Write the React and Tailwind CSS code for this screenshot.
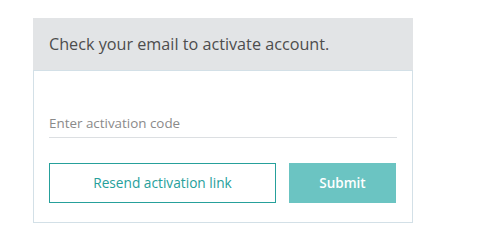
import React from 'react';

const font = { fontFamily: '"Open Sans", "Noto Sans", sans-serif' };

export default function App() {
  return (
    <div className="min-h-screen bg-white pt-[18px] pl-[33px]" style={font}>
      <div className="w-[380px]">
        <div className="h-[52px] bg-[#e2e4e6] px-4 flex items-center">
          <h1 className="text-[16.2px] text-[#4d4d4d]">Check your email to activate account.</h1>
        </div>
        <div className="border border-[#d3e0e7] px-[15px] pt-[36px] pb-[19px]">
          <input
            type="text"
            placeholder="Enter activation code"
            className="w-full h-[31px] pt-[2px] border-b border-[#dcdfe2] text-[13.4px] text-[#555] placeholder:text-[#8a8a8a] outline-none"
          />
          <div className="mt-[25px] flex gap-[13px]">
            <button className="w-[227px] h-[40px] border border-[#26a09b] text-[#26a09b] text-[13.7px]">
              Resend activation link
            </button>
            <button className="w-[107px] h-[40px] bg-[#6bc4c2] text-white text-[13.5px] font-semibold">
              Submit
            </button>
          </div>
        </div>
      </div>
    </div>
  );
}
